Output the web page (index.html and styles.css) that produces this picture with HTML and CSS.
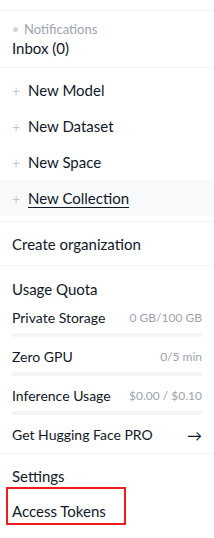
FILE: index.html
```html
<!DOCTYPE html>
<html>
<head>
<meta charset="utf-8">
<link rel="stylesheet" href="styles.css">
</head>
<body>
<div class="menu">
  <div class="section notif">
    <div class="notif-label"><span class="dot"></span>Notifications</div>
    <div class="inbox">Inbox (0)</div>
  </div>
  <div class="section create">
    <div class="item"><span class="plus">+</span>New Model</div>
    <div class="item"><span class="plus">+</span>New Dataset</div>
    <div class="item"><span class="plus">+</span>New Space</div>
    <div class="item hover"><span class="plus">+</span><span class="u">New Collection</span></div>
  </div>
  <div class="section org">
    <div class="item">Create organization</div>
  </div>
  <div class="section quota">
    <div class="quota-title">Usage Quota</div>
    <div class="q-row"><span>Private Storage</span><span class="q-val">0 GB/100 GB</span></div>
    <div class="bar"></div>
    <div class="q-row"><span>Zero GPU</span><span class="q-val">0/5 min</span></div>
    <div class="bar"></div>
    <div class="q-row"><span>Inference Usage</span><span class="q-val">$0.00 / $0.10</span></div>
    <div class="bar"></div>
    <div class="q-row"><span>Get Hugging Face PRO</span><span class="arrow">&#x2192;</span></div>
  </div>
  <div class="section settings">
    <div class="item">Settings</div>
    <div class="boxed">Access Tokens</div>
  </div>
</div>
</body>
</html>
```

FILE: styles.css
```css
html, body {
  margin: 0;
  padding: 0;
  background: #ffffff;
}
body {
  font-family: "Lato", "Noto Sans", sans-serif;
  color: #111827;
  font-size: 15px;
  padding-top: 10px;
}
.menu {
  width: 214px;
}
.section {
  border-top: 1px solid #f3f4f6;
}
.notif {
  padding: 10px 12px 9px;
}
.notif-label {
  display: flex;
  align-items: center;
  font-size: 13px;
  line-height: 17px;
  color: #9ca3af;
}
.dot {
  width: 5px;
  height: 5px;
  border-radius: 50%;
  background: #d1d5db;
  margin-left: 1px;
  margin-right: 6px;
}
.inbox {
  line-height: 20px;
}
.create {
  padding: 4px 0 5px;
}
.item {
  display: flex;
  align-items: center;
  height: 36px;
  padding: 0 12px;
}
.plus {
  color: #c4c8cf;
  width: 16px;
  font-size: 14px;
}
.hover {
  background: #f8f9fb;
}
.u {
  text-decoration: underline;
  text-underline-offset: 3px;
}
.org {
  padding: 4px 0 3px;
}
.quota {
  padding: 13px 12px 8px;
}
.quota-title {
  line-height: 20px;
  margin-bottom: 9px;
}
.q-row {
  display: flex;
  justify-content: space-between;
  align-items: center;
  font-size: 14px;
  line-height: 20px;
}
.q-val {
  font-size: 12px;
  color: #9ca3af;
}
.bar {
  height: 4px;
  border-radius: 2px;
  background: #f3f4f6;
  margin: 5px 0 10px;
}
.arrow {
  font-size: 15px;
  color: #111827;
}
.settings {
  padding: 4px 0 10px;
}
.boxed {
  box-sizing: border-box;
  width: 120px;
  height: 38px;
  margin: -7px 0 0 6px;
  padding: 14px 0 0 6px;
  line-height: 20px;
  border: 2px solid #ee1c1c;
  padding-left: 4px;
  padding-top: 12px;
}
```
